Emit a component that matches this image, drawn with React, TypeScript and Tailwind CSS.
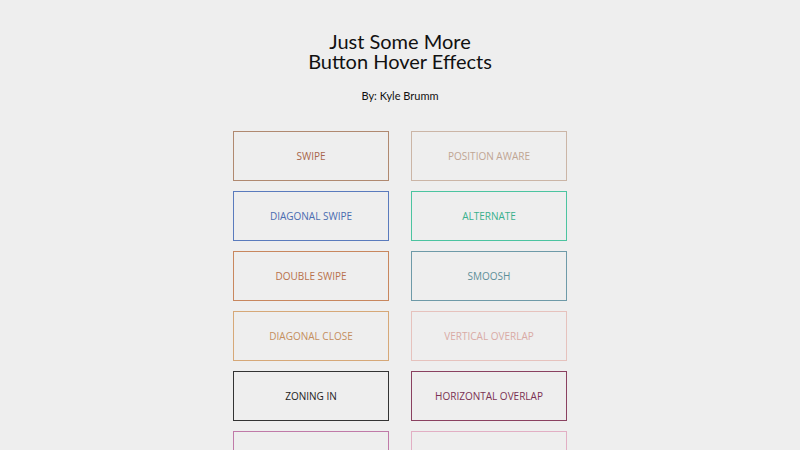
import React from 'react';

// each demo button: label, border colour, text colour
const BUTTONS = [
  { label: 'Swipe', border: 'border-[#b08970]', text: 'text-[#a8664a]' },
  { label: 'Position Aware', border: 'border-[#cbb5a6]', text: 'text-[#bfa593]' },
  { label: 'Diagonal Swipe', border: 'border-[#5a7bbd]', text: 'text-[#4a6cb0]' },
  { label: 'Alternate', border: 'border-[#4cc4a0]', text: 'text-[#39b08d]' },
  { label: 'Double Swipe', border: 'border-[#c8875e]', text: 'text-[#b8714b]' },
  { label: 'Smoosh', border: 'border-[#6e9aa8]', text: 'text-[#5e8f99]' },
  { label: 'Diagonal Close', border: 'border-[#d6a878]', text: 'text-[#c48e5e]' },
  { label: 'Vertical Overlap', border: 'border-[#e6c2bd]', text: 'text-[#d9aaa5]' },
  { label: 'Zoning In', border: 'border-[#333333]', text: 'text-[#222222]' },
  { label: 'Horizontal Overlap', border: 'border-[#8a4160]', text: 'text-[#7a3152]' },
  { label: 'Shrink', border: 'border-[#c07aa8]', text: 'text-[#b36b9b]' },
  { label: 'Grow', border: 'border-[#e2afc4]', text: 'text-[#d49ab2]' },
];

const App: React.FC = () => {
  return (
    <div className="min-h-screen bg-[#eeeeee] pt-[31px] font-['Open_Sans',sans-serif]">
      <h1 className="text-center text-[20px] leading-[20px] text-[#111] font-['Lato',sans-serif]">
        Just Some More<br />Button Hover Effects
      </h1>
      <p className="mt-[17px] text-center text-[11px] leading-[16px] text-[#111] font-['Lato',sans-serif]">By: Kyle Brumm</p>
      <div className="mx-auto mt-[27px] grid w-[334px] grid-cols-2 gap-x-[22px] gap-y-[10px]">
        {BUTTONS.map((b) => (
          <button
            key={b.label}
            className={`h-[50px] border bg-transparent text-[10px] uppercase ${b.border} ${b.text}`}
          >
            {b.label}
          </button>
        ))}
      </div>
    </div>
  );
};

export default App;
